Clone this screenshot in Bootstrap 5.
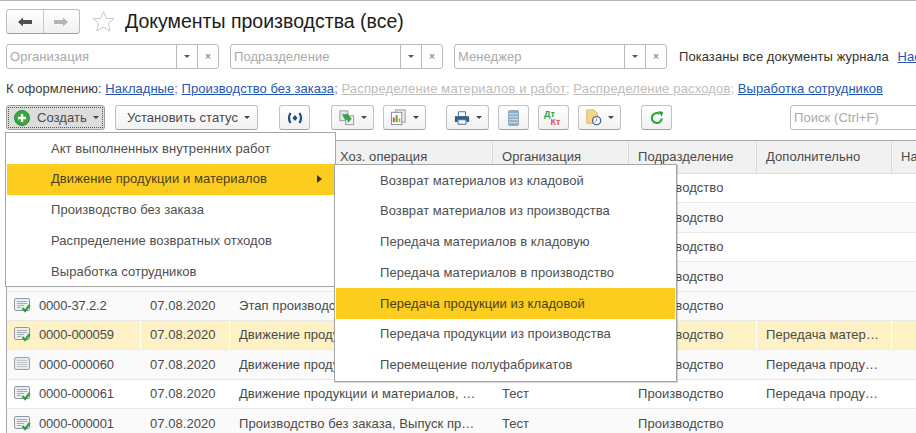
<!DOCTYPE html>
<html lang="ru">
<head>
<meta charset="utf-8">
<title>Документы производства (все)</title>
<link href="https://cdn.jsdelivr.net/npm/bootstrap@5.3.0/dist/css/bootstrap.min.css" rel="stylesheet">
<style>
html,body{height:433px;overflow:hidden;background:#fff}
body{font-family:"Liberation Sans",Arial,sans-serif;font-size:13px;color:#4a4a4a;letter-spacing:.06px;line-height:1.2}
.doc-page{position:relative;width:916px;height:433px;overflow:hidden;border-top:1px solid #b4b4b4}
.title-bar{height:25px;margin:8px 0 0 6px}
.hist-group{width:74px;height:25px;border:1px solid #bdbdbd;border-bottom-color:#a0a0a0;border-radius:3px;background:linear-gradient(#fff,#f0f0f0)}
.hist-group>span{flex:1 1 0;display:flex;align-items:center;justify-content:center}
.hist-group>span+span{border-left:1px solid #c8c8c8}
.star-ico{margin:0 10px 0 12px}
.doc-title{font-size:19.5px;color:#1c1c1c;margin:0;font-weight:400;letter-spacing:0;line-height:25px}
.filters{height:25px;margin:10px 0 0 6px;gap:11px;width:910px;overflow:hidden}
.pick{flex:none;width:213px;height:25px;border:1px solid #b9b9b9;border-radius:3px;background:#fff;display:flex;align-items:stretch}
.pick-text{flex:1 1 auto;color:#a9a9a9;padding:0 3px;line-height:23px}
.pick-btn{display:flex;align-items:center;justify-content:center;border-left:1px solid #b9b9b9;color:#666}
.pick-dd{width:21px}.pick-x{width:21px;font-size:11px}
.tri{display:block;width:0;height:0;border-left:3px solid transparent;border-right:3px solid transparent;border-top:3px solid #555}
.journal{flex:none;white-space:nowrap;margin-left:1px;color:#333}
.journal a{margin-left:5px}
.todo-row{height:20px;margin:10px 0 0 6px;line-height:20px;white-space:nowrap;color:#3c3c3c;letter-spacing:.04px}
a.lnk{color:#2257b5;text-decoration:underline}
.lnk-off{color:#bdbdbd;text-decoration:underline;letter-spacing:.16px}
.lnk-sep{color:#777}.lnk-sep-off{color:#bdbdbd}
.tools{height:25px;margin:6px 0 0 6px}
.tbtn{height:25px;padding:0;display:inline-flex;align-items:center;justify-content:center;border:1px solid #c2c2c2;border-bottom-color:#a3a3a3;border-radius:3px;background:linear-gradient(#fff,#f1f1f1);color:#4a4a4a;font-size:13px;letter-spacing:.06px;flex:none}
.tbtn.dropdown-toggle::after{border-top-width:3px;border-left-width:3px;border-right-width:3px;margin-left:6px;color:#444;vertical-align:0}
.tb-create{width:99px;background:#dcdcdc;border-color:#9f9f9f;position:relative;gap:7px;justify-content:flex-start;padding-left:7px}
.tb-create.dropdown-toggle::after{margin-left:-1px}
.tb-create::before{content:"";position:absolute;inset:1px;border:1px dotted #555}
.tb-create svg{position:relative}
.tb-status{width:143px;margin-left:10px;padding-left:4px}
.tb-s{width:31px}.tb-m{width:43px;gap:0}
.ml-a{margin-left:21px}.ml-b{margin-left:9px}.ml-c{margin-left:20px}
.search-box{width:140px;height:25px;margin-left:118px;border:1px solid #bdbdbd;border-radius:3px;color:#a9a9a9;padding:0 3px;line-height:23px;flex:none}
.grid-wrap{margin:10px 0 0 6px;width:1000px;border-left:1px solid #a8a8a8;border-top:1px solid #a8a8a8}
.doc-grid{table-layout:fixed;width:994px;margin:0;border-collapse:separate;border-spacing:0;color:#4a4a4a}
.doc-grid th,.doc-grid td{padding:0 0 0 9px;white-space:nowrap;overflow:hidden;vertical-align:middle;font-weight:400;background:transparent;box-shadow:none;color:#4a4a4a}
.doc-grid th{height:33px;background:#f1f1f1;border:0;border-right:1px solid #d9d9d9;border-bottom:1px solid #dedede}
.doc-grid td{height:29.4px;border:0;border-bottom:1px solid #e9e9e9}
.doc-grid tr.stripe td{background:#fafafa}
.doc-grid tr.sel td{background:#fdf1c5;border-right:1px solid #fff}
.doc-grid td.first{padding-left:7px}
.num-text{letter-spacing:-.17px}
.under-menu{display:block;width:96px;overflow:hidden}
.row-ico{vertical-align:-3px;margin-right:8px}
.pop{position:absolute;display:block;margin:0;padding:0;min-width:0;border:1px solid #a5a5a5;border-radius:0;background:#fff;z-index:5;font-size:13px}
.pop-a{left:5px;top:131px;width:331px;height:155px;padding:0 1px}
.pop-b{left:334px;top:163px;width:343px;height:218px;box-shadow:1px 1px 1px rgba(0,0,0,.15);padding:0 1px}
.pop .dropdown-item{display:flex;align-items:center;justify-content:space-between;height:30.75px;padding:0 12px 0 44px;color:#4f4f4f;letter-spacing:.06px}
.pop .dropdown-item.hot{background:#fccd1e;color:#4a3f1a}
.sub-arrow{width:0;height:0;border-top:4px solid transparent;border-bottom:4px solid transparent;border-left:5px solid #333}
</style>
</head>
<body>
<svg width="0" height="0" class="d-block" aria-hidden="true"><defs>
<symbol id="doc-ok" viewBox="0 0 17 15"><rect x=".5" y=".5" width="15" height="12" rx="1.500" fill="#eceff2" stroke="#8e9aa3"/><path d="M3 3.500h10M3 5.500h10M3 7.500h7M3 9.500h4" stroke="#a3adb5"/><path d="M8.500 10l2.600 3 4.600-6" fill="none" stroke="#2f9e3a" stroke-width="2.200"/></symbol>
<symbol id="doc-draft" viewBox="0 0 17 15"><rect x=".5" y=".5" width="15" height="12" rx="1.500" fill="#e6e8eb" stroke="#98a3ab"/><path d="M3 3.500h10M3 5.500h10M3 7.500h10M3 9.500h10" stroke="#c2c7cc"/></symbol>
</defs></svg>
<div class="doc-page">
  <div class="title-bar d-flex align-items-center">
    <div class="hist-group d-flex">
      <span><svg width="16" height="12" viewBox="0 0 16 12"><path d="M1 6l5-4.500V4h9v4H6v2.500z" fill="#4d4d4d"/></svg></span>
      <span><svg width="16" height="12" viewBox="0 0 16 12"><path d="M15 6l-5-4.500V4H1v4h9v2.500z" fill="#b5b5b5"/></svg></span>
    </div>
    <svg class="star-ico" width="23" height="23" viewBox="0 0 23 23"><path d="M11.500 1.500l3 7h7.500l-5.800 5 2 7.500-6.700-4-6.700 4 2-7.500-5.800-5h7.500z" fill="#fff" stroke="#c8c8c8"/></svg>
    <h1 class="doc-title">Документы производства (все)</h1>
  </div>

  <div class="filters d-flex align-items-center">
    <div class="pick"><span class="pick-text">Организация</span><span class="pick-btn pick-dd"><i class="tri"></i></span><span class="pick-btn pick-x">×</span></div>
    <div class="pick"><span class="pick-text">Подразделение</span><span class="pick-btn pick-dd"><i class="tri"></i></span><span class="pick-btn pick-x">×</span></div>
    <div class="pick"><span class="pick-text">Менеджер</span><span class="pick-btn pick-dd"><i class="tri"></i></span><span class="pick-btn pick-x">×</span></div>
    <div class="journal">Показаны все документы журнала <a class="lnk" href="#">Настроить</a></div>
  </div>

  <div class="todo-row">К оформлению: <a class="lnk" href="#">Накладные</a><span class="lnk-sep">;</span> <a class="lnk" href="#">Производство без заказа</a><span class="lnk-sep">;</span> <span class="lnk-off">Распределение материалов и работ</span><span class="lnk-sep-off">;</span> <span class="lnk-off">Распределение расходов</span><span class="lnk-sep-off">;</span> <a class="lnk" href="#">Выработка сотрудников</a></div>

  <div class="tools d-flex align-items-center">
    <button type="button" class="btn tbtn tb-create dropdown-toggle"><svg width="16" height="16" viewBox="0 0 16 16"><circle cx="8" cy="8" r="7.500" fill="#3aa83f" stroke="#2a8a31"/><path d="M8 4v8M4 8h8" stroke="#fff" stroke-width="2.400"/></svg>Создать</button>
    <button type="button" class="btn tbtn tb-status dropdown-toggle">Установить статус</button>
    <button type="button" class="btn tbtn tb-s ml-a" aria-label="Обмен"><svg width="16" height="12" viewBox="0 0 16 12"><path d="M3.500 1Q.5 6 3.500 11M12.500 1Q15.500 6 12.500 11" fill="none" stroke="#1f4e79" stroke-width="2.200"/><path d="M8 3l2.500 3L8 9 5.500 6z" fill="#1f4e79"/></svg></button>
    <button type="button" class="btn tbtn tb-m ml-a dropdown-toggle" aria-label="Создать на основании"><svg width="16" height="16" viewBox="0 0 18 18"><rect x="1" y="1" width="9" height="11" fill="#e3e6e8" stroke="#8d979f"/><rect x="7.500" y="6.500" width="9" height="10" fill="#eef0f1" stroke="#8d979f"/><path d="M4 5h5v-1l5 6-4 4v-3H7z" fill="#35a544" stroke="#1f8a30" stroke-width=".5"/></svg></button>
    <button type="button" class="btn tbtn tb-m ml-b dropdown-toggle" aria-label="Отчёты"><svg width="17" height="17" viewBox="0 0 18 18"><rect x="6" y="1" width="10" height="13" fill="#eef0f1" stroke="#8d979f"/><rect x="1.500" y="3.500" width="11" height="13" fill="#fff" stroke="#7f8a92"/><path d="M4 14V9" stroke="#d8433a" stroke-width="2"/><path d="M7 14V6.500" stroke="#3aa83f" stroke-width="2"/><path d="M10 14v-4" stroke="#e2a21e" stroke-width="2"/></svg></button>
    <button type="button" class="btn tbtn tb-m ml-c dropdown-toggle" aria-label="Печать"><svg width="16" height="16" viewBox="0 0 18 17"><path d="M5 1.500h8V7H5z" fill="#fff" stroke="#2f5f8a"/><path d="M1 6.500h16V13h-3v-2.500H4V13H1z" fill="#2f5f8a"/><path d="M4.500 10.500h9v5h-9z" fill="#fff" stroke="#2f5f8a"/></svg></button>
    <button type="button" class="btn tbtn tb-s ml-b" aria-label="Список"><svg width="11" height="16" viewBox="0 0 13 19"><rect x=".5" y=".5" width="12" height="18" rx="2" fill="#8fb0c9" stroke="#7d9db6"/><path d="M1 4.500h11M1 8h11M1 11.500h11M1 15h11" stroke="#dce7ef"/></svg></button>
    <button type="button" class="btn tbtn tb-s ml-b" aria-label="Дт Кт"><svg width="22" height="18" viewBox="0 0 24 20"><text x="1" y="9" font-family="Liberation Sans" font-size="10" font-weight="700" fill="#2f9e4a">Дт</text><text x="8" y="18" font-family="Liberation Sans" font-size="10" font-weight="700" fill="#e2504a">Кт</text></svg></button>
    <button type="button" class="btn tbtn tb-m ml-b dropdown-toggle" aria-label="Расписание"><svg width="17" height="17" viewBox="0 0 18 19"><path d="M1.500 1h8l4 4v11h-12z" fill="#f2d68a" stroke="#d4b663"/><circle cx="12.500" cy="13" r="4.500" fill="#fff" stroke="#3f6d9e" stroke-width="1.600"/><path d="M12.500 10.500V13l-2 1" fill="none" stroke="#d8433a"/></svg></button>
    <button type="button" class="btn tbtn tb-s ml-c" aria-label="Обновить"><svg width="14" height="14" viewBox="0 0 16 16"><path d="M13.500 8.500A5.700 5.700 0 1 1 11 3.300" fill="none" stroke="#2fa33c" stroke-width="2.400"/><path d="M9.500 0l5.500 1-1.500 5.500z" fill="#2fa33c"/></svg></button>
    <div class="search-box">Поиск (Ctrl+F)</div>
  </div>

  <div class="grid-wrap">
    <table class="table doc-grid">
      <colgroup><col style="width:134px"><col style="width:89px"><col style="width:101px"><col style="width:162px"><col style="width:136px"><col style="width:128px"><col style="width:135px"><col style="width:109px"></colgroup>
      <thead><tr><th></th><th></th><th></th><th>Хоз. операция</th><th>Организация</th><th>Подразделение</th><th>Дополнительно</th><th>Назначение</th></tr></thead>
      <tbody>
        <tr><td colspan="2"></td><td colspan="2"></td><td></td><td>Производство</td><td></td><td></td></tr>
        <tr class="stripe"><td colspan="2"></td><td colspan="2"></td><td></td><td>Производство</td><td></td><td></td></tr>
        <tr><td colspan="2"></td><td colspan="2"></td><td></td><td>Производство</td><td></td><td></td></tr>
        <tr class="stripe"><td colspan="2"></td><td colspan="2"></td><td></td><td>Производство</td><td></td><td></td></tr>
        <tr class="stripe"><td class="first"><svg class="row-ico" width="17" height="15"><use href="#doc-ok"/></svg><span class="num-text">0000-37.2.2</span></td><td>07.08.2020</td><td colspan="2"><span class="under-menu">Этап производства</span></td><td></td><td>Производство</td><td></td><td></td></tr>
        <tr class="sel"><td class="first"><svg class="row-ico" width="17" height="15"><use href="#doc-ok"/></svg><span class="num-text">0000-000059</span></td><td>07.08.2020</td><td colspan="2"><span class="under-menu">Движение продукции и материалов</span></td><td></td><td>Производство</td><td>Передача матер…</td><td></td></tr>
        <tr class="stripe"><td class="first"><svg class="row-ico" width="17" height="15"><use href="#doc-draft"/></svg><span class="num-text">0000-000060</span></td><td>07.08.2020</td><td colspan="2"><span class="under-menu">Движение продукции и материалов</span></td><td></td><td>Производство</td><td>Передача проду…</td><td></td></tr>
        <tr><td class="first"><svg class="row-ico" width="17" height="15"><use href="#doc-ok"/></svg><span class="num-text">0000-000061</span></td><td>07.08.2020</td><td colspan="2">Движение продукции и материалов, …</td><td>Тест</td><td>Производство</td><td>Передача проду…</td><td></td></tr>
        <tr class="stripe"><td class="first"><svg class="row-ico" width="17" height="15"><use href="#doc-ok"/></svg><span class="num-text">0000-000001</span></td><td>07.08.2020</td><td colspan="2">Производство без заказа, Выпуск пр…</td><td>Тест</td><td>Производство</td><td></td><td></td></tr>
      </tbody>
    </table>
  </div>

  <ul class="dropdown-menu pop pop-a list-unstyled">
    <li><a class="dropdown-item" href="#">Акт выполненных внутренних работ</a></li>
    <li><a class="dropdown-item hot" href="#">Движение продукции и материалов<i class="sub-arrow"></i></a></li>
    <li><a class="dropdown-item" href="#">Производство без заказа</a></li>
    <li><a class="dropdown-item" href="#">Распределение возвратных отходов</a></li>
    <li><a class="dropdown-item" href="#">Выработка сотрудников</a></li>
  </ul>
  <ul class="dropdown-menu pop pop-b list-unstyled">
    <li><a class="dropdown-item" href="#">Возврат материалов из кладовой</a></li>
    <li><a class="dropdown-item" href="#">Возврат материалов из производства</a></li>
    <li><a class="dropdown-item" href="#">Передача материалов в кладовую</a></li>
    <li><a class="dropdown-item" href="#">Передача материалов в производство</a></li>
    <li><a class="dropdown-item hot" href="#">Передача продукции из кладовой</a></li>
    <li><a class="dropdown-item" href="#">Передача продукции из производства</a></li>
    <li><a class="dropdown-item" href="#">Перемещение полуфабрикатов</a></li>
  </ul>
</div>
<script src="https://cdn.jsdelivr.net/npm/bootstrap@5.3.0/dist/js/bootstrap.bundle.min.js"></script>
</body>
</html>
